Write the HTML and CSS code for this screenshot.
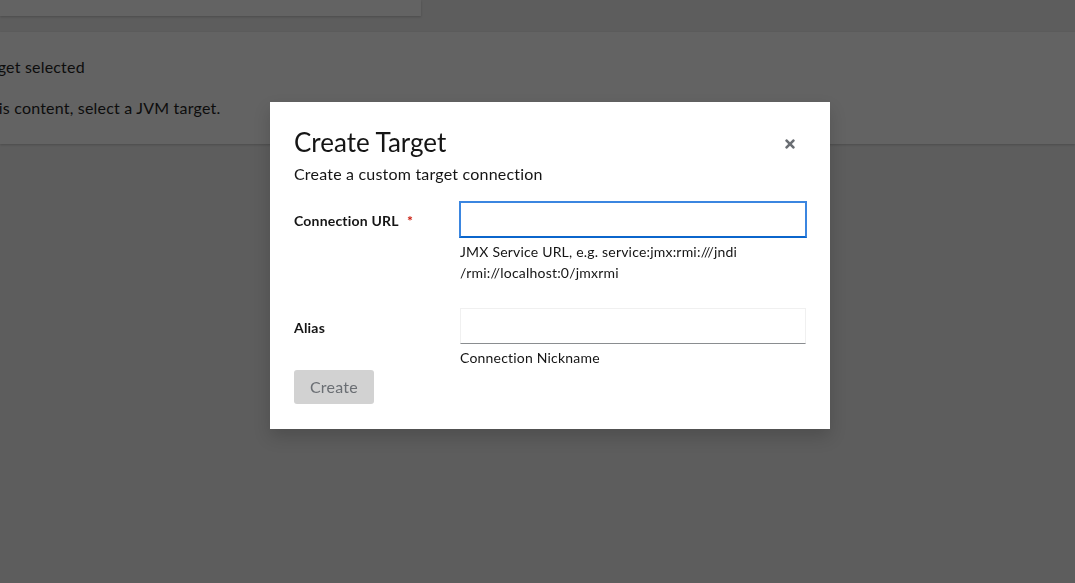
FILE: index.html
```html
<!DOCTYPE html>
<html lang="en">
<head>
<meta charset="utf-8">
<title>Create Target</title>
<link rel="stylesheet" href="styles.css">
</head>
<body>
<div class="page">
  <div class="top-card"></div>
  <div class="band">
    <div class="band-inner">
      <div class="empty-title">No target selected</div>
      <div class="empty-body">To view this content, select a JVM target.</div>
    </div>
  </div>
</div>
<div class="backdrop">
  <div class="modal" role="dialog">
    <div class="modal-head">
      <h1 class="modal-title">Create Target</h1>
      <button class="close" aria-label="Close">
        <svg viewBox="0 0 352 512" width="10" height="14"><path fill="currentColor" d="M242.72 256l100.07-100.07c12.280-12.28 12.28-32.19 0-44.48l-22.24-22.24c-12.28-12.28-32.19-12.28-44.48 0L176 189.28 75.930 89.21c-12.28-12.28-32.19-12.28-44.48 0L9.21 111.45c-12.28 12.28-12.28 32.19 0 44.48L109.28 256 9.21 356.07c-12.28 12.28-12.28 32.19 0 44.48l22.24 22.24c12.28 12.28 32.2 12.28 44.48 0L176 322.72l100.07 100.07c12.28 12.28 32.2 12.28 44.48 0l22.24-22.24c12.28-12.28 12.28-32.19 0-44.48L242.72 256z"/></svg>
      </button>
    </div>
    <p class="modal-desc">Create a custom target connection</p>
    <form class="form">
      <div class="form-row">
        <label class="label">Connection URL <span class="req">*</span></label>
        <div class="control">
          <div class="input focused"></div>
          <div class="helper">JMX Service URL, e.g. service:jmx:rmi:///jndi<br>/rmi://localhost:0/jmxrmi</div>
        </div>
      </div>
      <div class="form-row alias">
        <label class="label">Alias</label>
        <div class="control">
          <div class="input"></div>
          <div class="helper">Connection Nickname</div>
        </div>
      </div>
      <div class="actions">
        <button type="button" class="btn" disabled>Create</button>
      </div>
    </form>
  </div>
</div>
</body>
</html>
```
FILE: styles.css
```css
* { box-sizing: border-box; }
html, body { margin: 0; padding: 0; }
body {
  width: 1075px;
  height: 583px;
  overflow: hidden;
  background: #5d5d5d;
  font-family: "Lato", "Liberation Sans", sans-serif;
  letter-spacing: 0.2px;
  color: #151515;
}
.top-card {
  width: 421px;
  height: 16px;
  background: #636363;
  box-shadow: 0 1px 2px rgba(0,0,0,0.18);
}
.band {
  margin-top: 16px;
  height: 112px;
  background: #636363;
  box-shadow: 0 1px 2px rgba(0,0,0,0.18);
  overflow: hidden;
}
.band-inner {
  padding-top: 23px;
  font-size: 16px;
  color: #0d0d0d;
  white-space: nowrap;
}
.empty-title { line-height: 24px; margin-left: -48px; }
.empty-body { margin-top: 17px; line-height: 24px; margin-left: -75px; }

.backdrop {
  position: fixed;
  inset: 0;
  display: flex;
  align-items: flex-start;
  padding: 102px 0 0 270px;
}
.modal {
  width: 560px;
  background: #fff;
  padding: 24px 24px 25px;
  box-shadow: 0 8px 16px rgba(3,3,3,0.16);
}
.modal-head {
  display: flex;
  justify-content: space-between;
  align-items: flex-start;
}
.modal-title {
  margin: 0;
  font-size: 26px;
  font-weight: 400;
  letter-spacing: 0;
  line-height: 32px;
}
.close {
  border: 0;
  background: none;
  padding: 0;
  margin: 11px 11px 0 0;
  color: #6a6e73;
  display: flex;
}
.modal-desc {
  margin: 4px 0 0;
  font-size: 16px;
  line-height: 24px;
}
.form { margin-top: 15px; }
.form-row {
  display: grid;
  grid-template-columns: 150px 1fr;
  column-gap: 16px;
}
.form-row.alias { margin-top: 25px; }
.label {
  font-size: 14px;
  font-weight: 700;
  padding-top: 12px;
  line-height: 15px;
}
.req { color: #c9190b; margin-left: 5px; }
.input {
  height: 36px;
  border: 1px solid #f0f0f0;
  border-bottom-color: #8a8d90;
}
.input.focused {
  height: 37px;
  margin-left: -1px;
  margin-right: -1px;
  border: 2px solid #3b86e0;
  border-bottom-color: #0b66cc;
}
.helper {
  margin-top: 3px;
  font-size: 14px;
  line-height: 21px;
}
.actions { margin-top: 2px; }
.btn {
  font-family: inherit;
  font-size: 16px;
  letter-spacing: 0.2px;
  line-height: 24px;
  padding: 5px 16px;
  border: 0;
  border-radius: 3px;
  background: #d2d2d2;
  color: #6a6e73;
}
```
